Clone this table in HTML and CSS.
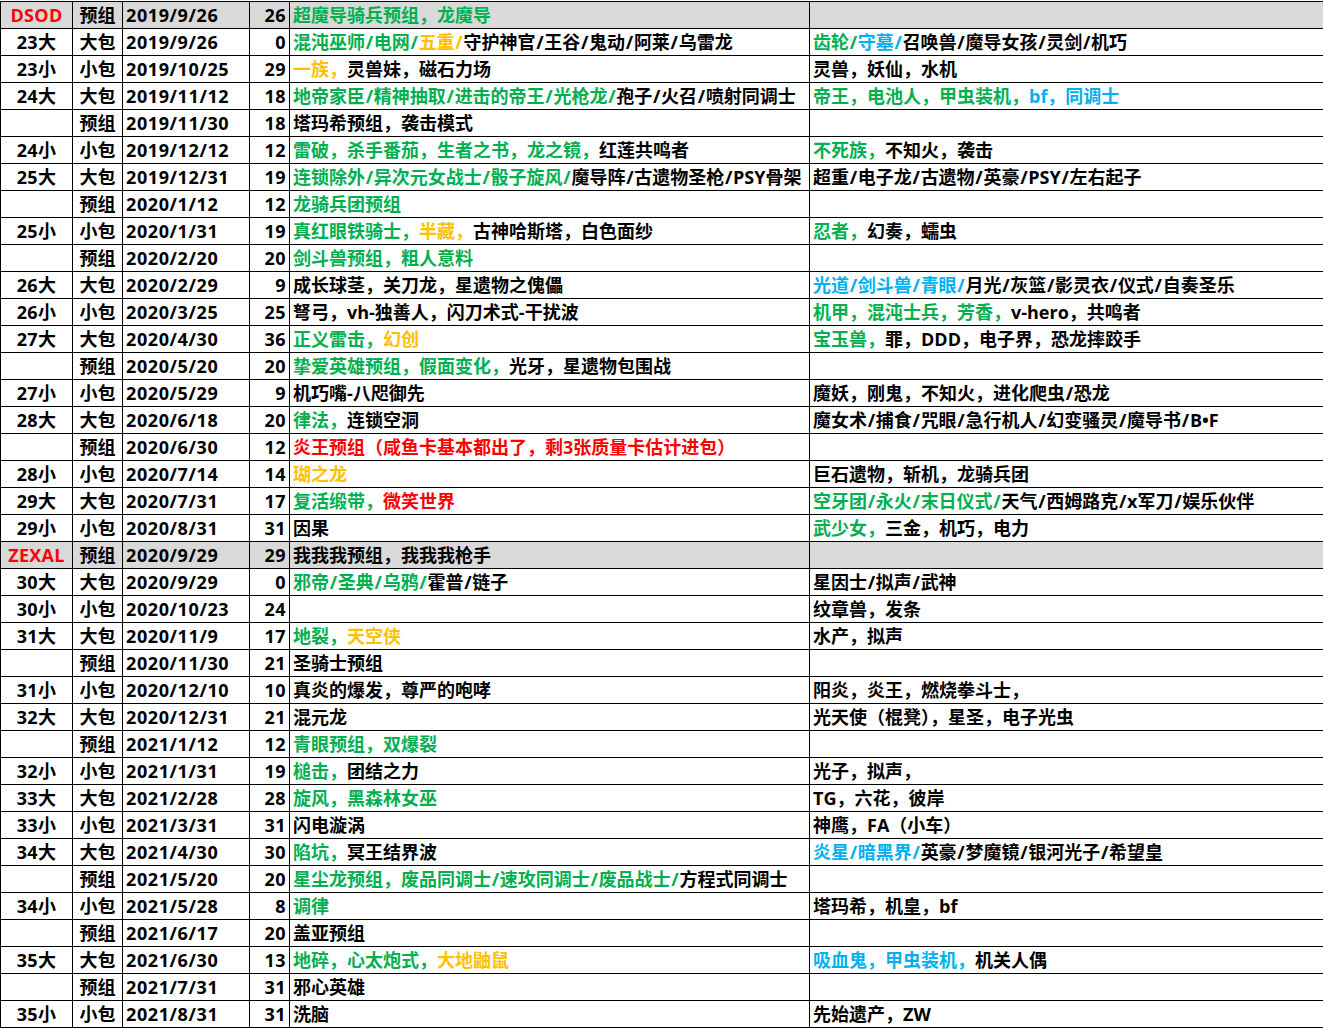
FILE: index.html
```html
<!DOCTYPE html>
<html lang="zh-CN">
<head>
<meta charset="utf-8">
<title>卡包表</title>
<link rel="stylesheet" href="styles.css">
</head>
<body>
<table class="sheet">
<colgroup>
<col class="c1"><col class="c2"><col class="c3"><col class="c4"><col class="c5"><col class="c6">
</colgroup>
<tbody>
<tr class="era"><td class="t-id red">DSOD</td><td class="t-type">预组</td><td class="t-date">2019/9/26</td><td class="t-num">26</td><td class="t-main"><span class="g">超魔导骑兵预组，龙魔导</span></td><td class="t-meta"></td></tr>
<tr><td class="t-id">23大</td><td class="t-type">大包</td><td class="t-date">2019/9/26</td><td class="t-num">0</td><td class="t-main"><span class="g">混沌巫师<i class="sl">/</i>电网<i class="sl">/</i></span><span class="o">五重<i class="sl">/</i></span>守护神官<i class="sl">/</i>王谷<i class="sl">/</i>鬼动<i class="sl">/</i>阿莱<i class="sl">/</i>乌雷龙</td><td class="t-meta"><span class="g">齿轮<i class="sl">/</i></span><span class="b">守墓<i class="sl">/</i></span>召唤兽<i class="sl">/</i>魔导女孩<i class="sl">/</i>灵剑<i class="sl">/</i>机巧</td></tr>
<tr><td class="t-id">23小</td><td class="t-type">小包</td><td class="t-date">2019/10/25</td><td class="t-num">29</td><td class="t-main"><span class="o">一族，</span>灵兽妹，磁石力场</td><td class="t-meta">灵兽，妖仙，水机</td></tr>
<tr><td class="t-id">24大</td><td class="t-type">大包</td><td class="t-date">2019/11/12</td><td class="t-num">18</td><td class="t-main"><span class="g">地帝家臣<i class="sl">/</i>精神抽取<i class="sl">/</i>进击的帝王<i class="sl">/</i>光枪龙<i class="sl">/</i></span>孢子<i class="sl">/</i>火召<i class="sl">/</i>喷射同调士</td><td class="t-meta"><span class="g">帝王，电池人，甲虫装机，</span><span class="b">bf，同调士</span></td></tr>
<tr><td class="t-id"></td><td class="t-type">预组</td><td class="t-date">2019/11/30</td><td class="t-num">18</td><td class="t-main">塔玛希预组，袭击模式</td><td class="t-meta"></td></tr>
<tr><td class="t-id">24小</td><td class="t-type">小包</td><td class="t-date">2019/12/12</td><td class="t-num">12</td><td class="t-main"><span class="g">雷破，杀手番茄，生者之书，龙之镜，</span>红莲共鸣者</td><td class="t-meta"><span class="g">不死族，</span>不知火，袭击</td></tr>
<tr><td class="t-id">25大</td><td class="t-type">大包</td><td class="t-date">2019/12/31</td><td class="t-num">19</td><td class="t-main"><span class="g">连锁除外<i class="sl">/</i>异次元女战士<i class="sl">/</i>骰子旋风<i class="sl">/</i></span>魔导阵<i class="sl">/</i>古遗物圣枪<i class="sl">/</i>PSY骨架</td><td class="t-meta">超重<i class="sl">/</i>电子龙<i class="sl">/</i>古遗物<i class="sl">/</i>英豪<i class="sl">/</i>PSY<i class="sl">/</i>左右起子</td></tr>
<tr><td class="t-id"></td><td class="t-type">预组</td><td class="t-date">2020/1/12</td><td class="t-num">12</td><td class="t-main"><span class="g">龙骑兵团预组</span></td><td class="t-meta"></td></tr>
<tr><td class="t-id">25小</td><td class="t-type">小包</td><td class="t-date">2020/1/31</td><td class="t-num">19</td><td class="t-main"><span class="g">真红眼铁骑士，</span><span class="o">半藏，</span>古神哈斯塔，白色面纱</td><td class="t-meta"><span class="g">忍者，</span>幻奏，蠕虫</td></tr>
<tr><td class="t-id"></td><td class="t-type">预组</td><td class="t-date">2020/2/20</td><td class="t-num">20</td><td class="t-main"><span class="g">剑斗兽预组，粗人意料</span></td><td class="t-meta"></td></tr>
<tr><td class="t-id">26大</td><td class="t-type">大包</td><td class="t-date">2020/2/29</td><td class="t-num">9</td><td class="t-main">成长球茎，关刀龙，星遗物之傀儡</td><td class="t-meta"><span class="b">光道<i class="sl">/</i>剑斗兽<i class="sl">/</i>青眼<i class="sl">/</i></span>月光<i class="sl">/</i>灰篮<i class="sl">/</i>影灵衣<i class="sl">/</i>仪式<i class="sl">/</i>自奏圣乐</td></tr>
<tr><td class="t-id">26小</td><td class="t-type">小包</td><td class="t-date">2020/3/25</td><td class="t-num">25</td><td class="t-main">弩弓，vh-独善人，闪刀术式-干扰波</td><td class="t-meta"><span class="g">机甲，混沌士兵，芳香，</span>v-hero，共鸣者</td></tr>
<tr><td class="t-id">27大</td><td class="t-type">大包</td><td class="t-date">2020/4/30</td><td class="t-num">36</td><td class="t-main"><span class="g">正义雷击，</span><span class="o">幻创</span></td><td class="t-meta"><span class="g">宝玉兽，</span>罪，DDD，电子界，恐龙摔跤手</td></tr>
<tr><td class="t-id"></td><td class="t-type">预组</td><td class="t-date">2020/5/20</td><td class="t-num">20</td><td class="t-main"><span class="g">挚爱英雄预组，假面变化，</span>光牙，星遗物包围战</td><td class="t-meta"></td></tr>
<tr><td class="t-id">27小</td><td class="t-type">小包</td><td class="t-date">2020/5/29</td><td class="t-num">9</td><td class="t-main">机巧嘴-八咫御先</td><td class="t-meta">魔妖，刚鬼，不知火，进化爬虫<i class="sl">/</i>恐龙</td></tr>
<tr><td class="t-id">28大</td><td class="t-type">大包</td><td class="t-date">2020/6/18</td><td class="t-num">20</td><td class="t-main"><span class="g">律法，</span>连锁空洞</td><td class="t-meta">魔女术<i class="sl">/</i>捕食<i class="sl">/</i>咒眼<i class="sl">/</i>急行机人<i class="sl">/</i>幻变骚灵<i class="sl">/</i>魔导书<i class="sl">/</i>B•F</td></tr>
<tr><td class="t-id"></td><td class="t-type">预组</td><td class="t-date">2020/6/30</td><td class="t-num">12</td><td class="t-main"><span class="r">炎王预组（咸鱼卡基本都出了，剩3张质量卡估计进包）</span></td><td class="t-meta"></td></tr>
<tr><td class="t-id">28小</td><td class="t-type">小包</td><td class="t-date">2020/7/14</td><td class="t-num">14</td><td class="t-main"><span class="o">瑚之龙</span></td><td class="t-meta">巨石遗物，斩机，龙骑兵团</td></tr>
<tr><td class="t-id">29大</td><td class="t-type">大包</td><td class="t-date">2020/7/31</td><td class="t-num">17</td><td class="t-main"><span class="g">复活缎带，</span><span class="r">微笑世界</span></td><td class="t-meta"><span class="g">空牙团<i class="sl">/</i>永火<i class="sl">/</i>末日仪式<i class="sl">/</i></span>天气<i class="sl">/</i>西姆路克<i class="sl">/</i>x军刀<i class="sl">/</i>娱乐伙伴</td></tr>
<tr><td class="t-id">29小</td><td class="t-type">小包</td><td class="t-date">2020/8/31</td><td class="t-num">31</td><td class="t-main">因果</td><td class="t-meta"><span class="g">武少女，</span>三金，机巧，电力</td></tr>
<tr class="era"><td class="t-id red">ZEXAL</td><td class="t-type">预组</td><td class="t-date">2020/9/29</td><td class="t-num">29</td><td class="t-main">我我我预组，我我我枪手</td><td class="t-meta"></td></tr>
<tr><td class="t-id">30大</td><td class="t-type">大包</td><td class="t-date">2020/9/29</td><td class="t-num">0</td><td class="t-main"><span class="g">邪帝<i class="sl">/</i>圣典<i class="sl">/</i>乌鸦<i class="sl">/</i></span>霍普<i class="sl">/</i>链子</td><td class="t-meta">星因士<i class="sl">/</i>拟声<i class="sl">/</i>武神</td></tr>
<tr><td class="t-id">30小</td><td class="t-type">小包</td><td class="t-date">2020/10/23</td><td class="t-num">24</td><td class="t-main"></td><td class="t-meta">纹章兽，发条</td></tr>
<tr><td class="t-id">31大</td><td class="t-type">大包</td><td class="t-date">2020/11/9</td><td class="t-num">17</td><td class="t-main"><span class="g">地裂，</span><span class="o">天空侠</span></td><td class="t-meta">水产，拟声</td></tr>
<tr><td class="t-id"></td><td class="t-type">预组</td><td class="t-date">2020/11/30</td><td class="t-num">21</td><td class="t-main">圣骑士预组</td><td class="t-meta"></td></tr>
<tr><td class="t-id">31小</td><td class="t-type">小包</td><td class="t-date">2020/12/10</td><td class="t-num">10</td><td class="t-main">真炎的爆发，尊严的咆哮</td><td class="t-meta">阳炎，炎王，燃烧拳斗士，</td></tr>
<tr><td class="t-id">32大</td><td class="t-type">大包</td><td class="t-date">2020/12/31</td><td class="t-num">21</td><td class="t-main">混元龙</td><td class="t-meta">光天使（棍凳），星圣，电子光虫</td></tr>
<tr><td class="t-id"></td><td class="t-type">预组</td><td class="t-date">2021/1/12</td><td class="t-num">12</td><td class="t-main"><span class="g">青眼预组，双爆裂</span></td><td class="t-meta"></td></tr>
<tr><td class="t-id">32小</td><td class="t-type">小包</td><td class="t-date">2021/1/31</td><td class="t-num">19</td><td class="t-main"><span class="g">槌击，</span>团结之力</td><td class="t-meta">光子，拟声，</td></tr>
<tr><td class="t-id">33大</td><td class="t-type">大包</td><td class="t-date">2021/2/28</td><td class="t-num">28</td><td class="t-main"><span class="g">旋风，黑森林女巫</span></td><td class="t-meta">TG，六花，彼岸</td></tr>
<tr><td class="t-id">33小</td><td class="t-type">小包</td><td class="t-date">2021/3/31</td><td class="t-num">31</td><td class="t-main">闪电漩涡</td><td class="t-meta">神鹰，FA（小车）</td></tr>
<tr><td class="t-id">34大</td><td class="t-type">大包</td><td class="t-date">2021/4/30</td><td class="t-num">30</td><td class="t-main"><span class="g">陷坑，</span>冥王结界波</td><td class="t-meta"><span class="b">炎星<i class="sl">/</i>暗黑界<i class="sl">/</i></span>英豪<i class="sl">/</i>梦魔镜<i class="sl">/</i>银河光子<i class="sl">/</i>希望皇</td></tr>
<tr><td class="t-id"></td><td class="t-type">预组</td><td class="t-date">2021/5/20</td><td class="t-num">20</td><td class="t-main"><span class="g">星尘龙预组，废品同调士<i class="sl">/</i>速攻同调士<i class="sl">/</i>废品战士<i class="sl">/</i></span>方程式同调士</td><td class="t-meta"></td></tr>
<tr><td class="t-id">34小</td><td class="t-type">小包</td><td class="t-date">2021/5/28</td><td class="t-num">8</td><td class="t-main"><span class="g">调律</span></td><td class="t-meta">塔玛希，机皇，bf</td></tr>
<tr><td class="t-id"></td><td class="t-type">预组</td><td class="t-date">2021/6/17</td><td class="t-num">20</td><td class="t-main">盖亚预组</td><td class="t-meta"></td></tr>
<tr><td class="t-id">35大</td><td class="t-type">大包</td><td class="t-date">2021/6/30</td><td class="t-num">13</td><td class="t-main"><span class="g">地碎，心太炮式，</span><span class="o">大地鼬鼠</span></td><td class="t-meta"><span class="b">吸血鬼，甲虫装机，</span>机关人偶</td></tr>
<tr><td class="t-id"></td><td class="t-type">预组</td><td class="t-date">2021/7/31</td><td class="t-num">31</td><td class="t-main">邪心英雄</td><td class="t-meta"></td></tr>
<tr><td class="t-id">35小</td><td class="t-type">小包</td><td class="t-date">2021/8/31</td><td class="t-num">31</td><td class="t-main">洗脑</td><td class="t-meta">先始遗产，ZW</td></tr>
</tbody>
</table>
</body>
</html>
```

FILE: styles.css
```css
html, body {
  margin: 0;
  padding: 0;
  background: #ffffff;
}

body {
  padding-top: 1px;
  font-family: "Open Sans", "Noto Sans CJK SC", sans-serif;
  font-weight: 700;
  font-size: 18px;
  color: #000000;
}

.sheet {
  border-collapse: collapse;
  table-layout: fixed;
  width: 1323px;
}

.c1 { width: 72px; }
.c2 { width: 50px; }
.c3 { width: 127px; }
.c4 { width: 40px; }
.c5 { width: 520px; }
.c6 { width: 514px; }

.sheet td {
  border: 1px solid #000000;
  height: 26px;
  padding: 0 3px;
  line-height: 26px;
  white-space: nowrap;
  overflow: hidden;
  vertical-align: middle;
}

.era td {
  background: #d9d9d9;
}

.t-id { text-align: center; letter-spacing: 0.3px; }
.t-type { text-align: center; }
.t-date { text-align: left; letter-spacing: 0.6px; }
.t-num { text-align: right; letter-spacing: 0.4px; }
.t-main { text-align: left; }
.t-meta { text-align: left; }

.sl {
  font-style: normal;
  margin: 0 0.7px;
}

.red { color: #ff0000; }
.g { color: #00b050; }
.o { color: #ffc000; }
.b { color: #00b0f0; }
.r { color: #ff0000; }
```
